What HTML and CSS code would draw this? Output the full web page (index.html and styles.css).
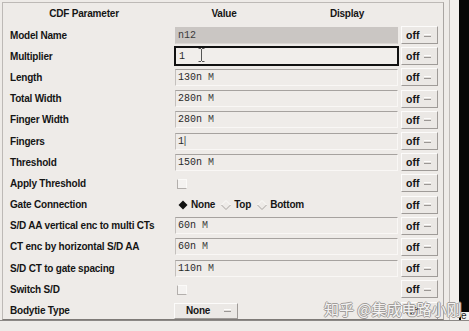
FILE: index.html
```html
<!DOCTYPE html>
<html lang="en">
<head>
    <meta charset="UTF-8">
    <title>CDF Parameter</title>
    <link rel="stylesheet" href="styles.css">
</head>
<body>
    <div class="screen">
        <div class="dialog">
            <div class="frame">
                <div class="head">
                    <span class="head-param">CDF Parameter</span>
                    <span class="head-value">Value</span>
                    <span class="head-display">Display</span>
                </div>

                <div class="row">
                    <span class="label">Model Name</span>
                    <span class="field field-disabled">n12</span>
                    <span class="cycle"><b>off</b><i class="dash"></i></span>
                </div>
                <div class="row">
                    <span class="label">Multiplier</span>
                    <span class="field field-focus">1<svg class="ibeam" width="7" height="14" viewBox="0 0 7 14"><path d="M0.5 0.5h2.5M4 0.5h2.5M3.5 1v12M0.5 13.5h2.5M4 13.5h2.5" stroke="#555" stroke-width="1" fill="none"/></svg></span>
                    <span class="cycle"><b>off</b><i class="dash"></i></span>
                </div>
                <div class="row">
                    <span class="label">Length</span>
                    <span class="field">130n <i class="caret">M</i></span>
                    <span class="cycle"><b>off</b><i class="dash"></i></span>
                </div>
                <div class="row">
                    <span class="label">Total Width</span>
                    <span class="field">280n <i class="caret">M</i></span>
                    <span class="cycle"><b>off</b><i class="dash"></i></span>
                </div>
                <div class="row">
                    <span class="label">Finger Width</span>
                    <span class="field">280n <i class="caret">M</i></span>
                    <span class="cycle"><b>off</b><i class="dash"></i></span>
                </div>
                <div class="row">
                    <span class="label">Fingers</span>
                    <span class="field">1<i class="caret caret-tight">|</i></span>
                    <span class="cycle"><b>off</b><i class="dash"></i></span>
                </div>
                <div class="row">
                    <span class="label">Threshold</span>
                    <span class="field">150n <i class="caret">M</i></span>
                    <span class="cycle"><b>off</b><i class="dash"></i></span>
                </div>
                <div class="row">
                    <span class="label">Apply Threshold</span>
                    <span class="check"></span>
                    <span class="cycle"><b>off</b><i class="dash"></i></span>
                </div>
                <div class="row">
                    <span class="label">Gate Connection</span>
                    <span class="radios">
                        <svg class="diamond" width="10" height="10" viewBox="0 0 10 10">
                            <path d="M5 0.5L9.5 5L5 9.5L0.5 5Z" fill="#111"/>
                        </svg>
                        <b>None</b>
                        <svg class="diamond" width="10" height="10" viewBox="0 0 10 10">
                            <path d="M0.5 5L5 0.5L9.5 5" stroke="#fbfaf8" fill="none"/>
                            <path d="M0.5 5L5 9.5L9.5 5" stroke="#a8a4a1" fill="none"/>
                        </svg>
                        <b>Top</b>
                        <svg class="diamond" width="10" height="10" viewBox="0 0 10 10">
                            <path d="M0.5 5L5 0.5L9.5 5" stroke="#fbfaf8" fill="none"/>
                            <path d="M0.5 5L5 9.5L9.5 5" stroke="#a8a4a1" fill="none"/>
                        </svg>
                        <b>Bottom</b>
                    </span>
                    <span class="cycle"><b>off</b><i class="dash"></i></span>
                </div>
                <div class="row">
                    <span class="label">S/D AA vertical enc to multi CTs</span>
                    <span class="field">60n <i class="caret">M</i></span>
                    <span class="cycle"><b>off</b><i class="dash"></i></span>
                </div>
                <div class="row">
                    <span class="label">CT enc by horizontal S/D AA</span>
                    <span class="field">60n <i class="caret">M</i></span>
                    <span class="cycle"><b>off</b><i class="dash"></i></span>
                </div>
                <div class="row">
                    <span class="label">S/D CT to gate spacing</span>
                    <span class="field">110n <i class="caret">M</i></span>
                    <span class="cycle"><b>off</b><i class="dash"></i></span>
                </div>
                <div class="row">
                    <span class="label">Switch S/D</span>
                    <span class="check"></span>
                    <span class="cycle"><b>off</b><i class="dash"></i></span>
                </div>
                <div class="row">
                    <span class="label">Bodytie Type</span>
                    <span class="menu"><b>None</b><i class="dash"></i></span>
                    <span class="cycle"><b>off</b><i class="dash"></i></span>
                </div>
            </div>
        </div>
        <div class="gutter"><div class="gutter-track"></div></div>
        <div class="side"><span class="peek">e</span></div>
    </div>
    <div class="watermark">知乎 @集成电路小刚</div>
</body>
</html>
```

FILE: styles.css
```css
/* base */
* {
    margin: 0;
    padding: 0;
    box-sizing: border-box;
}

body {
    width: 469px;
    height: 331px;
    overflow: hidden;
    position: relative;
    background: #eeebe8;
    font-family: 'Liberation Sans', Arial, sans-serif;
    font-size: 10px;
    letter-spacing: -0.2px;
    color: #151515;
}

b {
    font-weight: bold;
}

i {
    font-style: normal;
}

.screen {
    display: flex;
    height: 321px;
    border-bottom: 1px solid #8c8885;
}

.dialog {
    padding: 2px 0 0 2px;
}

.frame {
    width: 442px;
    height: 318px;
    overflow: hidden;
    border: 1px solid #bdb9b6;
    border-right-color: #a9a5a2;
    border-bottom-color: #7e7a77;
}

/* header */
.head {
    display: flex;
    height: 21.5px;
    align-items: center;
    font-weight: bold;
}

.head-param {
    width: 162px;
    text-align: center;
}

.head-value {
    width: 118px;
    text-align: center;
}

.head-display {
    width: 128px;
    text-align: center;
}

/* rows */
.row {
    display: flex;
    align-items: center;
    height: 21.2px;
    padding: 0 5px 0 7px;
}

.label {
    width: 165px;
    flex: none;
    font-weight: bold;
    white-space: nowrap;
}

.field {
    display: block;
    width: 223px;
    height: 17px;
    padding-left: 2px;
    font-family: 'Liberation Mono', 'Courier New', monospace;
    font-size: 10px;
    line-height: 15px;
    letter-spacing: 0;
    color: #2a2a2a;
    white-space: pre;
    background: #efece9;
    border: 1px solid #f9f7f5;
    border-top-color: #a6a29f;
    border-left-color: #c4c0bd;
}

.field-disabled {
    background: #cac6c3;
    border-color: #cac6c3;
    border-bottom-color: #dad6d3;
    color: #3a3a3a;
}

.field-focus {
    width: 225px;
    height: 20px;
    margin-left: -1px;
    border: 2px solid #111;
    background: #f1eeeb;
    padding-left: 3px;
    line-height: 16px;
}

.ibeam {
    margin-left: 13px;
    vertical-align: -3px;
}

.caret {
    color: #444;
}

.caret-tight {
    margin-left: -2px;
}

.check {
    width: 10px;
    height: 10px;
    margin-left: 2px;
    margin-top: 2px;
    background: #f4f2f0;
    border: 1px solid #fbfaf8;
    border-left-color: #b3afac;
    border-bottom-color: #b3afac;
}

.radios {
    display: flex;
    align-items: center;
    margin-left: 3px;
}

.radios b {
    margin: 0 6px 0 3px;
}

.menu {
    width: 64px;
    height: 16px;
    margin-left: -1px;
    display: flex;
    align-items: center;
    padding: 0 6px 0 11px;
    background: #ebe8e5;
    border: 1px solid #fcfbfa;
    border-right-color: #9f9b98;
    border-bottom-color: #9f9b98;
}

.menu .dash {
    margin-left: auto;
}

.cycle {
    width: 37px;
    height: 18px;
    margin-left: auto;
    display: flex;
    align-items: center;
    padding: 0 6px 0 4px;
    background: #ebe8e5;
    border: 1px solid #fcfbfa;
    border-right-color: #9f9b98;
    border-bottom-color: #9f9b98;
}

.cycle b {
    font-size: 10.5px;
    letter-spacing: 0;
}

.dash {
    width: 7px;
    height: 3px;
    margin-left: auto;
    border-top: 1px solid #fdfcfb;
    border-bottom: 1px solid #9b9794;
    background: #e2dfdc;
}

/* right edge */
.gutter {
    width: 15px;
    padding-left: 5px;
}

.gutter-track {
    height: 100%;
    border-left: 1px solid #bfbbb8;
    background: #f2efec;
}

.side {
    flex: 1;
    background: #060606;
    position: relative;
}

.peek {
    position: absolute;
    left: 2px;
    bottom: 0;
    width: 9px;
    height: 8px;
    background: #f2f0ee;
    color: #222;
    font-size: 10px;
    line-height: 8px;
}

/* watermark over the corner */
.watermark {
    position: absolute;
    left: 324px;
    top: 299px;
    white-space: nowrap;
    font-family: 'Noto Sans CJK SC', sans-serif;
    font-size: 15px;
    letter-spacing: 0;
    line-height: 20px;
    color: rgba(255, 255, 255, 0.9);
    text-shadow: 1px 0 #a19d9a, -1px 0 #a19d9a, 0 1px #a19d9a, 0 -1px #a19d9a;
}
```
